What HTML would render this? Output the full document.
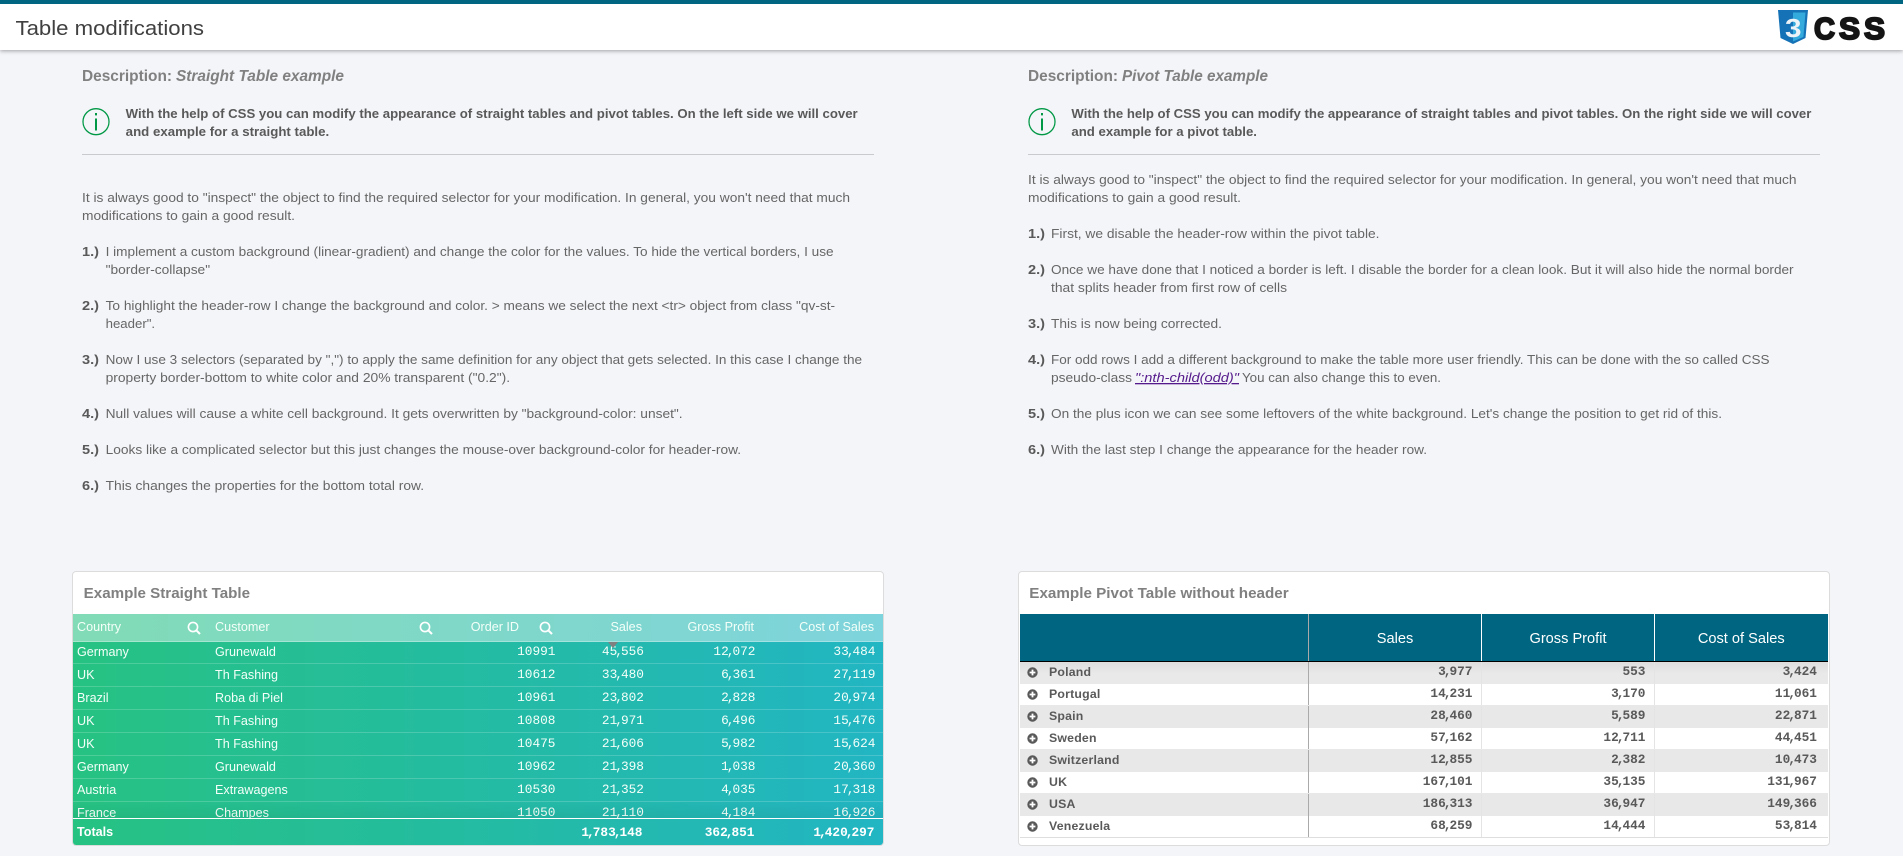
<!DOCTYPE html>
<html lang="en">
<head>
<meta charset="utf-8">
<title>Table modifications</title>
<style>
html,body{margin:0;padding:0;width:1903px;height:856px;overflow:hidden;background:#f4f5f9;font-family:"Liberation Sans",sans-serif}
.top{position:absolute;left:0;top:0;width:1903px;height:50px;background:#fff;border-top:4px solid #006580;box-sizing:border-box;box-shadow:0 1px 4px rgba(0,0,0,.35)}
.card{position:absolute;top:571px;width:810px;height:273px;background:#fff;border:1px solid #dcdcdc;border-radius:4px}
#c1{left:72px}
#c2{left:1018px}
svg.ov{position:absolute;left:0;top:0;z-index:5}
svg.ov text{font-family:"Liberation Sans",sans-serif}
.t{font-size:13px;fill:#666}
.b{font-size:13px;fill:#595959;font-weight:bold}
.d{font-size:16px;fill:#808080;font-weight:bold}
.h{font-size:15px;fill:#808080;font-weight:bold}
.st{position:absolute;left:73px;top:614px;width:810px;height:231px;overflow:hidden;border-radius:0 0 3px 3px;background:linear-gradient(to right,rgb(38,194,130),rgb(34,181,195));color:#f4fff9;font-size:12.6px}
.st table{border-collapse:separate;border-spacing:0;table-layout:fixed;width:810px;position:absolute;left:0}
.st td,.st th{box-sizing:border-box;padding:0;font-weight:normal;text-align:left;vertical-align:top;white-space:nowrap;overflow:hidden}
.st .hd{top:0;background:rgba(255,255,255,.42);height:27px}
.st .hd td{height:27px;line-height:27px;padding-left:4px;border-bottom:1px solid rgba(255,255,255,.3)}
.st .bdy{position:absolute;left:0;top:27px;width:810px;height:177px;overflow:hidden}
.st .bdy:after{content:"";position:absolute;left:0;right:0;bottom:0;height:18px;background:linear-gradient(to bottom,rgba(0,0,0,0),rgba(0,0,0,.05))}
.st .bdy td{height:23px;line-height:22px;padding-left:4px;border-bottom:1px solid rgba(255,255,255,.18)}
.st .n,.st .tot .n{font-family:"Liberation Mono",monospace;font-size:12.8px;text-align:right}
.st .tot{top:204px;border-top:1px solid #fff;height:27px}
.st .tot td{height:26px;line-height:27px;padding-left:4px;font-weight:bold;color:#fff}
.st .bdy td.r1{padding-right:3.5px}
.st .bdy td.r2{padding-right:3px}
.st .bdy td.r3{padding-right:3.5px}
.st .bdy td.r4{padding-right:7.5px}
.st .ra{text-align:right}
i.c{font-style:normal;margin:0 -2px}
.sort{position:absolute;left:535px;top:27.5px;width:0;height:0;border-left:5px solid transparent;border-right:5px solid transparent;border-top:6px solid #808080;z-index:3}
.sic{position:absolute;top:7px;z-index:3}
.pv{position:absolute;left:1020px;top:614px;width:807.5px;height:224px;font-size:12.3px;color:#595959}
.pv .ph{display:flex;height:47px;background:#006580;border-bottom:1px solid #000;color:#fff;font-size:14.6px;line-height:40px;padding-top:0;box-sizing:content-box}
.pv .ph div{box-sizing:border-box;text-align:center;height:47px;line-height:48px;border-right:1px solid #fff;padding-top:1px}
.pv .ph div:first-child{border-right:1px solid #aaa}
.pv .ph div:last-child{border-right:0}
.c0{width:289px}.c1{width:173px}.c2{width:173px}.c3{width:172.5px}
.pr{display:flex;height:22px;line-height:20px;font-weight:bold;position:relative;background:#fff;letter-spacing:.2px}
.pr.g{background:#e8e8e8;box-shadow:0 -1px 0 #e8e8e8}
.pr.first{background:linear-gradient(to bottom,#dedede,#e9e9e9 12px);box-shadow:none}
.pr>div{box-sizing:border-box;height:22px;border-right:1px solid #e4e4e4}
.pr>.c0{border-right:1px solid #aaa;padding-left:29px;position:relative}
.pr>.c3{border-right:0}
.pr .num{font-family:"Liberation Mono",monospace;font-size:12.8px;text-align:right;letter-spacing:0;padding-right:8.5px}
.pr>.c3.num{padding-right:10.5px}
.pr .pl{position:absolute;left:6.5px;top:4.5px}
.pbot{position:absolute;left:0;top:223px;width:807.5px;height:1px;background:#dedede}
</style>
</head>
<body>
<div class="top"></div>
<div class="card" id="c1"></div>
<div class="card" id="c2"></div>

<div class="st">
  <table class="hd"><colgroup><col style="width:138px"><col style="width:249px"><col style="width:99px"><col style="width:88px"><col style="width:112px"><col style="width:124px"></colgroup>
  <tr><td>Country</td><td>Customer</td><td class="ra" style="padding-right:40px">Order ID</td><td class="ra" style="padding-right:5px">Sales</td><td class="ra" style="padding-right:5px">Gross Profit</td><td class="ra" style="padding-right:9px">Cost of Sales</td></tr></table>
  <svg class="sic" style="left:114px" width="14" height="14" viewBox="0 0 14 14"><circle cx="6" cy="6" r="4.6" fill="none" stroke="#fff" stroke-width="1.6"/><path d="M9.4 9.4L13 13" stroke="#fff" stroke-width="2"/></svg>
  <svg class="sic" style="left:346px" width="14" height="14" viewBox="0 0 14 14"><circle cx="6" cy="6" r="4.6" fill="none" stroke="#fff" stroke-width="1.6"/><path d="M9.4 9.4L13 13" stroke="#fff" stroke-width="2"/></svg>
  <svg class="sic" style="left:466px" width="14" height="14" viewBox="0 0 14 14"><circle cx="6" cy="6" r="4.6" fill="none" stroke="#fff" stroke-width="1.6"/><path d="M9.4 9.4L13 13" stroke="#fff" stroke-width="2"/></svg>
  <div class="sort"></div>
  <div class="bdy">
  <table style="top:0"><colgroup><col style="width:138px"><col style="width:249px"><col style="width:99px"><col style="width:88px"><col style="width:112px"><col style="width:124px"></colgroup>
  <tr><td>Germany</td><td>Grunewald</td><td class="n r1">10991</td><td class="n r2">45<i class="c">,</i>556</td><td class="n r3">12<i class="c">,</i>072</td><td class="n r4">33<i class="c">,</i>484</td></tr>
  <tr><td>UK</td><td>Th Fashing</td><td class="n r1">10612</td><td class="n r2">33<i class="c">,</i>480</td><td class="n r3">6<i class="c">,</i>361</td><td class="n r4">27<i class="c">,</i>119</td></tr>
  <tr><td>Brazil</td><td>Roba di Piel</td><td class="n r1">10961</td><td class="n r2">23<i class="c">,</i>802</td><td class="n r3">2<i class="c">,</i>828</td><td class="n r4">20<i class="c">,</i>974</td></tr>
  <tr><td>UK</td><td>Th Fashing</td><td class="n r1">10808</td><td class="n r2">21<i class="c">,</i>971</td><td class="n r3">6<i class="c">,</i>496</td><td class="n r4">15<i class="c">,</i>476</td></tr>
  <tr><td>UK</td><td>Th Fashing</td><td class="n r1">10475</td><td class="n r2">21<i class="c">,</i>606</td><td class="n r3">5<i class="c">,</i>982</td><td class="n r4">15<i class="c">,</i>624</td></tr>
  <tr><td>Germany</td><td>Grunewald</td><td class="n r1">10962</td><td class="n r2">21<i class="c">,</i>398</td><td class="n r3">1<i class="c">,</i>038</td><td class="n r4">20<i class="c">,</i>360</td></tr>
  <tr><td>Austria</td><td>Extrawagens</td><td class="n r1">10530</td><td class="n r2">21<i class="c">,</i>352</td><td class="n r3">4<i class="c">,</i>035</td><td class="n r4">17<i class="c">,</i>318</td></tr>
  <tr><td>France</td><td>Champes</td><td class="n r1">11050</td><td class="n r2">21<i class="c">,</i>110</td><td class="n r3">4<i class="c">,</i>184</td><td class="n r4">16<i class="c">,</i>926</td></tr>
  </table>
  </div>
  <table class="tot"><colgroup><col style="width:138px"><col style="width:249px"><col style="width:99px"><col style="width:88px"><col style="width:112px"><col style="width:124px"></colgroup>
  <tr><td>Totals</td><td></td><td></td><td class="n" style="padding-right:4.5px">1<i class="c">,</i>783<i class="c">,</i>148</td><td class="n" style="padding-right:4.5px">362<i class="c">,</i>851</td><td class="n" style="padding-right:8.5px">1<i class="c">,</i>420<i class="c">,</i>297</td></tr></table>
</div>

<div class="pv">
  <div class="ph"><div class="c0"></div><div class="c1">Sales</div><div class="c2">Gross Profit</div><div class="c3">Cost of Sales</div></div>
  <div class="pr g first"><div class="c0"><svg class="pl" width="11" height="11" viewBox="0 0 11 11"><circle cx="5.5" cy="5.5" r="5.2" fill="#595959"/><path d="M2.6 5.5H8.4M5.5 2.6V8.4" stroke="#fff" stroke-width="1.8"/></svg>Poland</div><div class="c1 num">3<i class="c">,</i>977</div><div class="c2 num">553</div><div class="c3 num">3<i class="c">,</i>424</div></div>
  <div class="pr"><div class="c0"><svg class="pl" width="11" height="11" viewBox="0 0 11 11"><circle cx="5.5" cy="5.5" r="5.2" fill="#595959"/><path d="M2.6 5.5H8.4M5.5 2.6V8.4" stroke="#fff" stroke-width="1.8"/></svg>Portugal</div><div class="c1 num">14<i class="c">,</i>231</div><div class="c2 num">3<i class="c">,</i>170</div><div class="c3 num">11<i class="c">,</i>061</div></div>
  <div class="pr g"><div class="c0"><svg class="pl" width="11" height="11" viewBox="0 0 11 11"><circle cx="5.5" cy="5.5" r="5.2" fill="#595959"/><path d="M2.6 5.5H8.4M5.5 2.6V8.4" stroke="#fff" stroke-width="1.8"/></svg>Spain</div><div class="c1 num">28<i class="c">,</i>460</div><div class="c2 num">5<i class="c">,</i>589</div><div class="c3 num">22<i class="c">,</i>871</div></div>
  <div class="pr"><div class="c0"><svg class="pl" width="11" height="11" viewBox="0 0 11 11"><circle cx="5.5" cy="5.5" r="5.2" fill="#595959"/><path d="M2.6 5.5H8.4M5.5 2.6V8.4" stroke="#fff" stroke-width="1.8"/></svg>Sweden</div><div class="c1 num">57<i class="c">,</i>162</div><div class="c2 num">12<i class="c">,</i>711</div><div class="c3 num">44<i class="c">,</i>451</div></div>
  <div class="pr g"><div class="c0"><svg class="pl" width="11" height="11" viewBox="0 0 11 11"><circle cx="5.5" cy="5.5" r="5.2" fill="#595959"/><path d="M2.6 5.5H8.4M5.5 2.6V8.4" stroke="#fff" stroke-width="1.8"/></svg>Switzerland</div><div class="c1 num">12<i class="c">,</i>855</div><div class="c2 num">2<i class="c">,</i>382</div><div class="c3 num">10<i class="c">,</i>473</div></div>
  <div class="pr"><div class="c0"><svg class="pl" width="11" height="11" viewBox="0 0 11 11"><circle cx="5.5" cy="5.5" r="5.2" fill="#595959"/><path d="M2.6 5.5H8.4M5.5 2.6V8.4" stroke="#fff" stroke-width="1.8"/></svg>UK</div><div class="c1 num">167<i class="c">,</i>101</div><div class="c2 num">35<i class="c">,</i>135</div><div class="c3 num">131<i class="c">,</i>967</div></div>
  <div class="pr g"><div class="c0"><svg class="pl" width="11" height="11" viewBox="0 0 11 11"><circle cx="5.5" cy="5.5" r="5.2" fill="#595959"/><path d="M2.6 5.5H8.4M5.5 2.6V8.4" stroke="#fff" stroke-width="1.8"/></svg>USA</div><div class="c1 num">186<i class="c">,</i>313</div><div class="c2 num">36<i class="c">,</i>947</div><div class="c3 num">149<i class="c">,</i>366</div></div>
  <div class="pr"><div class="c0"><svg class="pl" width="11" height="11" viewBox="0 0 11 11"><circle cx="5.5" cy="5.5" r="5.2" fill="#595959"/><path d="M2.6 5.5H8.4M5.5 2.6V8.4" stroke="#fff" stroke-width="1.8"/></svg>Venezuela</div><div class="c1 num">68<i class="c">,</i>259</div><div class="c2 num">14<i class="c">,</i>444</div><div class="c3 num">53<i class="c">,</i>814</div></div>
  <div class="pbot"></div>
</div>

<svg class="ov" width="1903" height="856" viewBox="0 0 1903 856">
  <text x="15.5" y="35" font-size="20" fill="#404040" textLength="188.5" lengthAdjust="spacingAndGlyphs">Table modifications</text>

  <!-- CSS logo -->
  <path d="M1778 10H1808L1805.5 38L1793 44L1780.5 38Z" fill="#1572b6"/>
  <path d="M1793 12.5H1805.5L1803.4 37L1793 41.5Z" fill="#33a9dc"/>
  <text x="1785" y="37" font-size="26" font-weight="bold" fill="#eef3f7" textLength="16.5" lengthAdjust="spacingAndGlyphs">3</text>
  <g font-size="31" font-weight="bold" fill="#141414" stroke="#141414" stroke-width="2" stroke-linejoin="miter">
    <text x="1814" y="39" textLength="21" lengthAdjust="spacingAndGlyphs">C</text>
    <text x="1839" y="39" textLength="21" lengthAdjust="spacingAndGlyphs">S</text>
    <text x="1864" y="39" textLength="21" lengthAdjust="spacingAndGlyphs">S</text>
  </g>

  <!-- Left description -->
  <text class="d" x="82" y="81" textLength="90" lengthAdjust="spacingAndGlyphs">Description:</text>
  <text class="d" x="176" y="81" font-style="italic" textLength="168" lengthAdjust="spacingAndGlyphs">Straight Table example</text>
  <circle cx="96" cy="121.7" r="13" fill="none" stroke="#009845" stroke-width="1.3"/>
  <rect x="95" y="113" width="2" height="2.4" fill="#009845"/>
  <rect x="95" y="118.5" width="2" height="12" fill="#009845"/>
  <text class="b" x="125.7" y="118" textLength="732" lengthAdjust="spacingAndGlyphs">With the help of CSS you can modify the appearance of straight tables and pivot tables. On the left side we will cover</text>
  <text class="b" x="125.7" y="136" textLength="203.5" lengthAdjust="spacingAndGlyphs">and example for a straight table.</text>
  <rect x="82" y="154" width="792" height="1" fill="#c9cacd"/>
  <text class="t" x="82" y="202" textLength="768" lengthAdjust="spacingAndGlyphs">It is always good to "inspect" the object to find the required selector for your modification. In general, you won't need that much</text>
  <text class="t" x="82" y="220" textLength="213" lengthAdjust="spacingAndGlyphs">modifications to gain a good result.</text>

  <text class="b" x="82" y="256" textLength="17" lengthAdjust="spacingAndGlyphs">1.)</text>
  <text class="t" x="105.6" y="256" textLength="728" lengthAdjust="spacingAndGlyphs">I implement a custom background (linear-gradient) and change the color for the values. To hide the vertical borders, I use</text>
  <text class="t" x="105.6" y="274" textLength="104.5" lengthAdjust="spacingAndGlyphs">"border-collapse"</text>

  <text class="b" x="82" y="310" textLength="17" lengthAdjust="spacingAndGlyphs">2.)</text>
  <text class="t" x="105.6" y="310" textLength="729.5" lengthAdjust="spacingAndGlyphs">To highlight the header-row I change the background and color. &gt; means we select the next &lt;tr&gt; object from class "qv-st-</text>
  <text class="t" x="105.6" y="328" textLength="49.5" lengthAdjust="spacingAndGlyphs">header".</text>

  <text class="b" x="82" y="364" textLength="17" lengthAdjust="spacingAndGlyphs">3.)</text>
  <text class="t" x="105.6" y="364" textLength="756.5" lengthAdjust="spacingAndGlyphs">Now I use 3 selectors (separated by ",") to apply the same definition for any object that gets selected. In this case I change the</text>
  <text class="t" x="105.6" y="382" textLength="404.5" lengthAdjust="spacingAndGlyphs">property border-bottom to white color and 20% transparent ("0.2").</text>

  <text class="b" x="82" y="418" textLength="17" lengthAdjust="spacingAndGlyphs">4.)</text>
  <text class="t" x="105.6" y="418" textLength="577" lengthAdjust="spacingAndGlyphs">Null values will cause a white cell background. It gets overwritten by "background-color: unset".</text>

  <text class="b" x="82" y="454" textLength="17" lengthAdjust="spacingAndGlyphs">5.)</text>
  <text class="t" x="105.6" y="454" textLength="635.5" lengthAdjust="spacingAndGlyphs">Looks like a complicated selector but this just changes the mouse-over background-color for header-row.</text>

  <text class="b" x="82" y="490" textLength="17" lengthAdjust="spacingAndGlyphs">6.)</text>
  <text class="t" x="105.6" y="490" textLength="318.5" lengthAdjust="spacingAndGlyphs">This changes the properties for the bottom total row.</text>

  <!-- Right description -->
  <text class="d" x="1028" y="81" textLength="90" lengthAdjust="spacingAndGlyphs">Description:</text>
  <text class="d" x="1122" y="81" font-style="italic" textLength="146" lengthAdjust="spacingAndGlyphs">Pivot Table example</text>
  <circle cx="1042" cy="121.7" r="13" fill="none" stroke="#009845" stroke-width="1.3"/>
  <rect x="1041" y="113" width="2" height="2.4" fill="#009845"/>
  <rect x="1041" y="118.5" width="2" height="12" fill="#009845"/>
  <text class="b" x="1071.4" y="118" textLength="740" lengthAdjust="spacingAndGlyphs">With the help of CSS you can modify the appearance of straight tables and pivot tables. On the right side we will cover</text>
  <text class="b" x="1071.4" y="136" textLength="185.6" lengthAdjust="spacingAndGlyphs">and example for a pivot table.</text>
  <rect x="1028" y="154" width="792" height="1" fill="#c9cacd"/>
  <text class="t" x="1028" y="184" textLength="768.5" lengthAdjust="spacingAndGlyphs">It is always good to "inspect" the object to find the required selector for your modification. In general, you won't need that much</text>
  <text class="t" x="1028" y="202" textLength="213" lengthAdjust="spacingAndGlyphs">modifications to gain a good result.</text>

  <text class="b" x="1028" y="238" textLength="17" lengthAdjust="spacingAndGlyphs">1.)</text>
  <text class="t" x="1051" y="238" textLength="328.5" lengthAdjust="spacingAndGlyphs">First, we disable the header-row within the pivot table.</text>

  <text class="b" x="1028" y="274" textLength="17" lengthAdjust="spacingAndGlyphs">2.)</text>
  <text class="t" x="1051" y="274" textLength="742.6" lengthAdjust="spacingAndGlyphs">Once we have done that I noticed a border is left. I disable the border for a clean look. But it will also hide the normal border</text>
  <text class="t" x="1051" y="292" textLength="236" lengthAdjust="spacingAndGlyphs">that splits header from first row of cells</text>

  <text class="b" x="1028" y="328" textLength="17" lengthAdjust="spacingAndGlyphs">3.)</text>
  <text class="t" x="1051" y="328" textLength="171" lengthAdjust="spacingAndGlyphs">This is now being corrected.</text>

  <text class="b" x="1028" y="364" textLength="17" lengthAdjust="spacingAndGlyphs">4.)</text>
  <text class="t" x="1051" y="364" textLength="718.5" lengthAdjust="spacingAndGlyphs">For odd rows I add a different background to make the table more user friendly. This can be done with the so called CSS</text>
  <text class="t" x="1051" y="382" textLength="81" lengthAdjust="spacingAndGlyphs">pseudo-class</text>
  <text x="1135" y="382" font-size="13" font-style="italic" fill="#551a8b" text-decoration="underline" textLength="104" lengthAdjust="spacingAndGlyphs">":nth-child(odd)"</text>
  <text class="t" x="1242" y="382" textLength="199" lengthAdjust="spacingAndGlyphs">You can also change this to even.</text>

  <text class="b" x="1028" y="418" textLength="17" lengthAdjust="spacingAndGlyphs">5.)</text>
  <text class="t" x="1051" y="418" textLength="671" lengthAdjust="spacingAndGlyphs">On the plus icon we can see some leftovers of the white background. Let's change the position to get rid of this.</text>

  <text class="b" x="1028" y="454" textLength="17" lengthAdjust="spacingAndGlyphs">6.)</text>
  <text class="t" x="1051" y="454" textLength="376" lengthAdjust="spacingAndGlyphs">With the last step I change the appearance for the header row.</text>

  <!-- Card titles -->
  <text class="h" x="83.7" y="598" textLength="166.3" lengthAdjust="spacingAndGlyphs">Example Straight Table</text>
  <text class="h" x="1029.3" y="598" textLength="259.4" lengthAdjust="spacingAndGlyphs">Example Pivot Table without header</text>
</svg>
</body>
</html>
